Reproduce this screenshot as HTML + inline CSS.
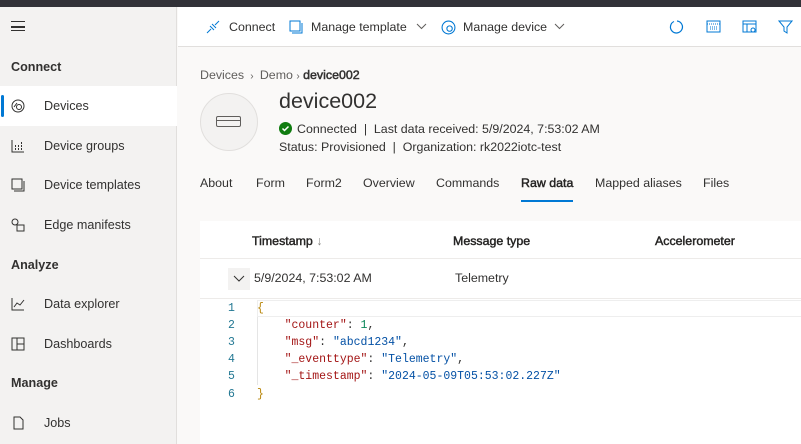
<!DOCTYPE html><html><head><style>
*{margin:0;padding:0;box-sizing:border-box}
body{width:801px;height:444px;overflow:hidden;font-family:"Liberation Sans",sans-serif;font-size:12.4px;color:#323130;background:#faf9f8;position:relative}
.a{position:absolute;white-space:nowrap}
.top{left:0;top:0;width:801px;height:7px;background:#323238}
.side{left:0;top:7px;width:177px;height:437px;background:#f3f2f1;border-right:1px solid #e1dfdd}
.tb{left:178px;top:7px;width:623px;height:40px;background:#fff;border-bottom:1px solid #e1dfdd}
.sec{font-size:12.6px;font-weight:bold;color:#323130;left:11px}
.it{left:44px;font-size:12.6px}
.ic{left:11px;width:14px;height:14px}
.card{left:200px;top:221px;width:601px;height:223px;background:#fff}
.code{font-family:"Liberation Mono",monospace;font-size:11.5px}
.k{color:#a31515}.s{color:#0451a5}.n{color:#098658}.b{color:#b8860b}
.ln{color:#237893;font-family:"Liberation Mono",monospace;font-size:11.5px;left:228px}
.h{font-weight:normal;color:#252423;-webkit-text-stroke:0.45px #252423}
</style></head><body>
<div class="a top"></div>
<div class="a side"></div>
<div class="a" style="left:11px;top:21px;width:14px;height:10px;border-top:1.5px solid #323130;border-bottom:1.5px solid #323130"></div>
<div class="a" style="left:11px;top:26px;width:14px;height:1.5px;background:#323130"></div>
<div class="a sec" style="top:60px">Connect</div>
<div class="a" style="left:0;top:86px;width:177px;height:40px;background:#fff"></div>
<div class="a" style="left:1px;top:95px;width:3px;height:22px;background:#0078d4;border-radius:2px"></div>
<svg class="a ic" style="top:99px" viewBox="0 0 14 14"><circle cx="7" cy="7" r="6" fill="none" stroke="#323130"/><circle cx="8" cy="8" r="2.5" fill="none" stroke="#323130"/><path d="M3 8 L6 4" stroke="#323130"/></svg>
<div class="a it" style="top:99px">Devices</div>
<svg class="a ic" style="top:139px" viewBox="0 0 14 14"><path d="M1 1V13H13" fill="none" stroke="#323130"/><path d="M4 10h1M7 10h1M10 10h1M7 7h1M10 7h1M10 4h1M4 7h1" stroke="#323130" stroke-width="2"/></svg>
<div class="a it" style="top:139px">Device groups</div>
<svg class="a ic" style="top:178px" viewBox="0 0 14 14"><rect x="1" y="1" width="10" height="10" fill="none" stroke="#323130"/><path d="M3 13H13V3" fill="none" stroke="#323130"/></svg>
<div class="a it" style="top:178px">Device templates</div>
<svg class="a ic" style="top:218px" viewBox="0 0 14 14"><circle cx="4" cy="4" r="3" fill="none" stroke="#323130"/><rect x="6" y="7" width="7" height="6" fill="none" stroke="#323130"/></svg>
<div class="a it" style="top:218px">Edge manifests</div>
<div class="a sec" style="top:258px">Analyze</div>
<svg class="a ic" style="top:297px" viewBox="0 0 14 14"><path d="M1 1V13H13M3 10L6 6L9 8L13 3" fill="none" stroke="#323130"/></svg>
<div class="a it" style="top:297px">Data explorer</div>
<svg class="a ic" style="top:337px" viewBox="0 0 14 14"><rect x="1" y="1" width="12" height="12" fill="none" stroke="#323130"/><path d="M6 1V13M6 7H13" stroke="#323130"/></svg>
<div class="a it" style="top:337px">Dashboards</div>
<div class="a sec" style="top:376px">Manage</div>
<svg class="a ic" style="top:416px" viewBox="0 0 14 14"><path d="M3 1H9L12 4V13H3Z" fill="none" stroke="#323130"/></svg>
<div class="a it" style="top:416px">Jobs</div>

<div class="a tb"></div>
<svg class="a" style="left:206px;top:20px" width="14" height="14" viewBox="0 0 14 14"><path d="M1 13L5 9M9 5L13 1M4 6L8 10M6 4l4 4" stroke="#0078d4" fill="none"/></svg>
<div class="a" style="left:229px;top:20px">Connect</div>
<svg class="a" style="left:289px;top:20px" width="14" height="14" viewBox="0 0 14 14"><rect x="1" y="1" width="10" height="10" fill="none" stroke="#0078d4"/><path d="M3 13H13V3" fill="none" stroke="#0078d4"/></svg>
<div class="a" style="left:311px;top:20px">Manage template</div>
<svg class="a" style="left:416px;top:23px" width="11" height="7" viewBox="0 0 11 7"><path d="M1 1L5.5 5.5L10 1" fill="none" stroke="#605e5c"/></svg>
<svg class="a" style="left:441px;top:20px" width="15" height="15" viewBox="0 0 14 14"><circle cx="7" cy="7" r="6" fill="none" stroke="#0078d4"/><circle cx="8" cy="8" r="2.5" fill="none" stroke="#0078d4"/></svg>
<div class="a" style="left:463px;top:20px">Manage device</div>
<svg class="a" style="left:554px;top:23px" width="11" height="7" viewBox="0 0 11 7"><path d="M1 1L5.5 5.5L10 1" fill="none" stroke="#605e5c"/></svg>
<svg class="a" style="left:669px;top:19px" width="16" height="16" viewBox="0 0 16 16"><path d="M5 2.5A6 6 0 1 0 8 2" fill="none" stroke="#0078d4" stroke-width="1.2"/></svg>
<svg class="a" style="left:706px;top:19px" width="15" height="15" viewBox="0 0 15 15"><rect x="1" y="2" width="13" height="11" fill="none" stroke="#0078d4"/><path d="M1 5H14M4 8h8M4 10h8" stroke="#0078d4" stroke-dasharray="1 1"/></svg>
<svg class="a" style="left:742px;top:19px" width="15" height="15" viewBox="0 0 15 15"><rect x="1" y="2" width="13" height="11" fill="none" stroke="#0078d4"/><path d="M1 5H14M5 5V13" stroke="#0078d4"/><circle cx="11" cy="11" r="2" fill="#fff" stroke="#0078d4"/></svg>
<svg class="a" style="left:778px;top:19px" width="15" height="15" viewBox="0 0 15 15"><path d="M1 2H14L9 8V14L6 12V8Z" fill="none" stroke="#0078d4"/></svg>

<div class="a" style="left:200px;top:68px;color:#605e5c">Devices <span style="font-size:10px">&nbsp;›&nbsp;</span> Demo <span style="font-size:10px">›</span> <span class="h" style="color:#323130;-webkit-text-stroke:0.5px #323130">device002</span></div>
<div class="a" style="left:200px;top:93px;width:58px;height:58px;border-radius:50%;border:1px solid #e1dfdd;background:#f3f2f1"></div>
<div class="a" style="left:216px;top:116px;width:25px;height:11px;border:1.3px solid #605e5c;border-radius:2px"></div>
<div class="a" style="left:216px;top:120px;width:25px;height:1px;background:#605e5c"></div>
<div class="a" style="left:279px;top:89px;font-size:21.5px;color:#323130">device002</div>
<div class="a" style="left:279px;top:122px;width:13px;height:13px;border-radius:50%;background:#107c10"></div>
<svg class="a" style="left:279px;top:122px" width="13" height="13" viewBox="0 0 13 13"><path d="M3.5 6.5L5.5 8.5L9.5 4.5" stroke="#fff" stroke-width="1.5" fill="none"/></svg>
<div class="a" style="left:297px;top:122px">Connected &nbsp;| &nbsp;Last data received: 5/9/2024, 7:53:02 AM</div>
<div class="a" style="left:279px;top:140px">Status: Provisioned &nbsp;| &nbsp;Organization: rk2022iotc-test</div>
<div class="a" style="left:200px;top:176px">About</div>
<div class="a" style="left:256px;top:176px">Form</div>
<div class="a" style="left:306px;top:176px">Form2</div>
<div class="a" style="left:363px;top:176px">Overview</div>
<div class="a" style="left:436px;top:176px">Commands</div>
<div class="a h" style="left:521px;top:176px">Raw data</div>
<div class="a" style="left:521px;top:200px;width:52px;height:2px;background:#0078d4"></div>
<div class="a" style="left:595px;top:176px">Mapped aliases</div>
<div class="a" style="left:703px;top:176px">Files</div>

<div class="a card"></div>
<div class="a" style="left:200px;top:258px;width:601px;height:1px;background:#edebe9"></div>
<div class="a" style="left:200px;top:298px;width:601px;height:1px;background:#edebe9"></div>
<div class="a h" style="left:252px;top:234px">Timestamp <span style="color:#8a8886;-webkit-text-stroke:0">↓</span></div>
<div class="a h" style="left:453px;top:234px">Message type</div>
<div class="a h" style="left:655px;top:234px">Accelerometer</div>
<div class="a" style="left:228px;top:268px;width:22px;height:22px;background:#f3f2f1"></div>
<svg class="a" style="left:233px;top:275px" width="12" height="8" viewBox="0 0 12 8"><path d="M1 1L6 6L11 1" fill="none" stroke="#323130"/></svg>
<div class="a" style="left:254px;top:271px">5/9/2024, 7:53:02 AM</div>
<div class="a" style="left:455px;top:271px">Telemetry</div>
<div class="a" style="left:257px;top:300px;width:544px;height:17px;border:1px solid #eeeeee;border-right:none"></div>
<div class="a" style="left:257px;top:317px;width:1px;height:68px;background:#e5e5e5"></div>
<div class="a ln" style="top:302px">1</div>
<div class="a ln" style="top:319px">2</div>
<div class="a ln" style="top:336px">3</div>
<div class="a ln" style="top:353px">4</div>
<div class="a ln" style="top:370px">5</div>
<div class="a ln" style="top:388px">6</div>
<div class="a code" style="left:257px;top:302px"><span class="b">{</span></div>
<div class="a code" style="left:257px;top:319px"><span class="k">&nbsp;&nbsp;&nbsp;&nbsp;"counter"</span>: <span class="n">1</span>,</div>
<div class="a code" style="left:257px;top:336px"><span class="k">&nbsp;&nbsp;&nbsp;&nbsp;"msg"</span>: <span class="s">"abcd1234"</span>,</div>
<div class="a code" style="left:257px;top:353px"><span class="k">&nbsp;&nbsp;&nbsp;&nbsp;"_eventtype"</span>: <span class="s">"Telemetry"</span>,</div>
<div class="a code" style="left:257px;top:370px"><span class="k">&nbsp;&nbsp;&nbsp;&nbsp;"_timestamp"</span>: <span class="s">"2024-05-09T05:53:02.227Z"</span></div>
<div class="a code" style="left:257px;top:388px"><span class="b">}</span></div>
</body></html>
